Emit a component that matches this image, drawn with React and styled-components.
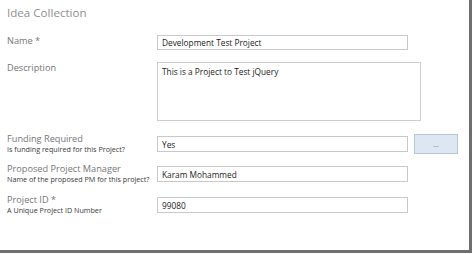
import React from 'react';
import styled, { createGlobalStyle } from 'styled-components';

const Global = createGlobalStyle`
  html, body { margin: 0; padding: 0; background: #fff; }
  body { font-family: "Open Sans", "Noto Sans", sans-serif; }
`;

const Frame = styled.div`
  box-sizing: border-box;
  width: 472px;
  height: 253px;
  border-right: 3px solid #6e6e6e;
  border-bottom: 3px solid #6e6e6e;
  padding: 5px 0 0 7px;
  background: #fff;
  display: flex;
  flex-direction: column;
`;

const Title = styled.h1`
  margin: 0;
  font-size: 11.6px;
  line-height: 16px;
  font-weight: 400;
  color: #8f8f8f;
`;

const Row = styled.div`
  display: grid;
  grid-template-columns: 150px auto;
  align-items: start;
  margin-top: ${(p) => p.$gap}px;
`;

const LabelCell = styled.div`
  display: flex;
  flex-direction: column;
  margin-top: ${(p) => (p.$sub ? -3 : 0)}px;
`;

const Label = styled.span`
  font-size: 9.2px;
  line-height: 11px;
  color: #767676;
  white-space: nowrap;
`;

const Sub = styled.span`
  font-size: 7.2px;
  line-height: 10px;
  color: #3a3a3a;
  white-space: nowrap;
`;

const FieldCell = styled.div`
  display: flex;
  align-items: center;
`;

const TextInput = styled.input`
  box-sizing: border-box;
  width: 251px;
  height: ${(p) => p.$h}px;
  margin: 0;
  padding: 0 4px;
  border: 1px solid #c9c9c9;
  font-family: "Open Sans", "Noto Sans", sans-serif;
  font-size: 8.3px;
  color: #222;
  background: #fff;
  outline: none;
`;

const TextArea = styled.textarea`
  box-sizing: border-box;
  width: 264px;
  height: 59px;
  margin: 0;
  padding: 3px 4px;
  border: 1px solid #cdcdcd;
  font-family: "Open Sans", "Noto Sans", sans-serif;
  font-size: 8.3px;
  line-height: 11px;
  color: #222;
  background: #fff;
  resize: none;
  outline: none;
  display: block;
`;

const BrowseButton = styled.button`
  box-sizing: border-box;
  width: 44px;
  height: 20px;
  margin: -2px 0 -2px 6px;
  padding: 0;
  border: 1px solid #b8c7d8;
  background: #dce7f3;
  color: #6a6a6a;
  font-family: "Open Sans", "Noto Sans", sans-serif;
  font-size: 7px;
  line-height: 1;
`;

export default function App() {
  return (
    <>
      <Global />
      <Frame>
        <Title>Idea Collection</Title>

        <Row $gap={14}>
          <LabelCell>
            <Label>Name *</Label>
          </LabelCell>
          <FieldCell>
            <TextInput $h={15} readOnly value="Development Test Project" />
          </FieldCell>
        </Row>

        <Row $gap={12}>
          <LabelCell>
            <Label>Description</Label>
          </LabelCell>
          <FieldCell>
            <TextArea readOnly value="This is a Project to Test jQuery" />
          </FieldCell>
        </Row>

        <Row $gap={15}>
          <LabelCell $sub>
            <Label>Funding Required</Label>
            <Sub>Is funding required for this Project?</Sub>
          </LabelCell>
          <FieldCell>
            <TextInput $h={16} readOnly value="Yes" />
            <BrowseButton type="button">...</BrowseButton>
          </FieldCell>
        </Row>

        <Row $gap={12}>
          <LabelCell $sub>
            <Label>Proposed Project Manager</Label>
            <Sub>Name of the proposed PM for this project?</Sub>
          </LabelCell>
          <FieldCell>
            <TextInput $h={16} readOnly value="Karam Mohammed" />
          </FieldCell>
        </Row>

        <Row $gap={13}>
          <LabelCell $sub>
            <Label>Project ID *</Label>
            <Sub>A Unique Project ID Number</Sub>
          </LabelCell>
          <FieldCell>
            <TextInput $h={16} readOnly value="99080" />
          </FieldCell>
        </Row>
      </Frame>
    </>
  );
}
